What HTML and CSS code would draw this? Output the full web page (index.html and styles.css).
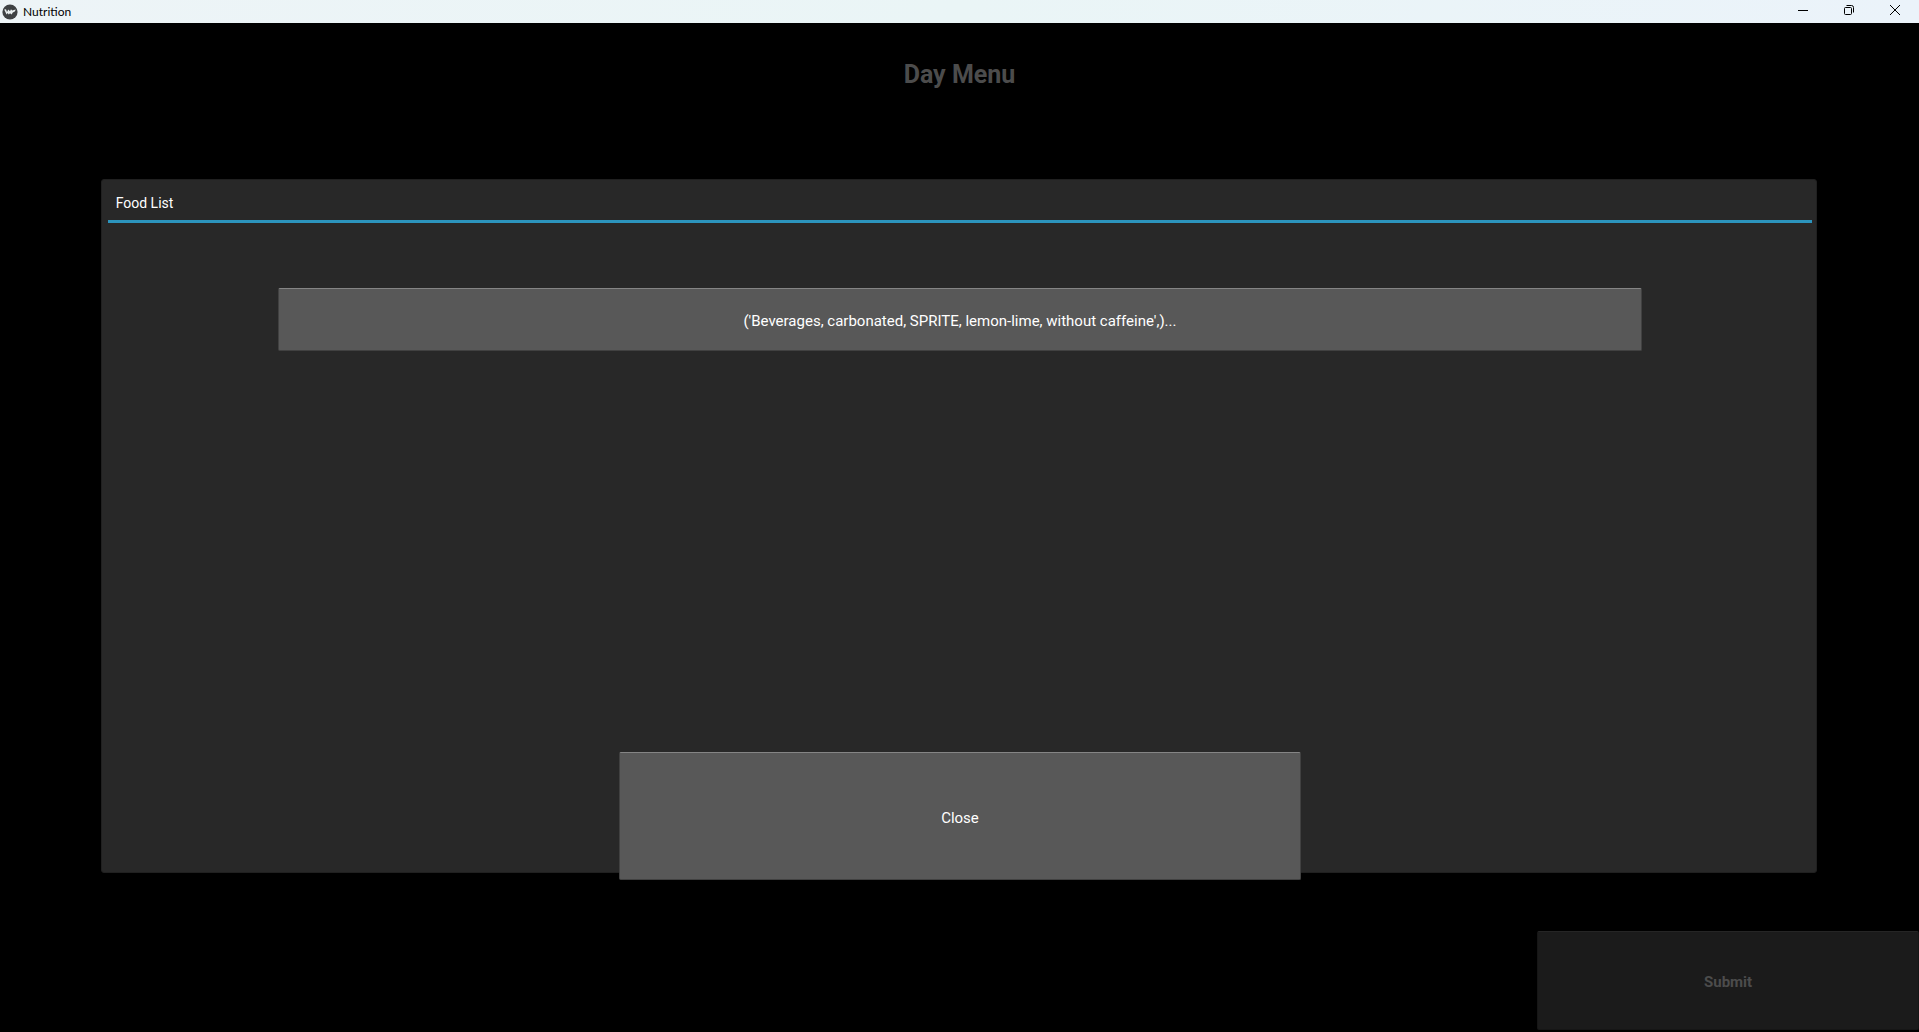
FILE: index.html
```html
<!DOCTYPE html>
<html lang="en">
<head>
<meta charset="utf-8">
<title>Nutrition</title>
<link rel="stylesheet" href="styles.css">
</head>
<body>
<header class="titlebar">
  <svg class="app-icon" viewBox="0 0 16 16" aria-hidden="true">
    <circle cx="8" cy="8" r="7.6" fill="#3f4244"/>
    <path d="M2.2 5.4 4 5.2 5 8 6.3 5.6 8 7.2 9 5.2 10.2 6.4 13.8 5.6 12.8 7.6 10.8 8.4 9.6 10.4 8 9.2 6.8 10.6 5.6 9 4.6 10.4Z" fill="#e9eff0"/>
  </svg>
  <span class="app-name">Nutrition</span>
  <div class="window-controls">
    <button class="window-button" type="button" aria-label="Minimize">
      <svg viewBox="0 0 12 12"><path d="M1 6.5H11"/></svg>
    </button>
    <button class="window-button" type="button" aria-label="Restore">
      <svg viewBox="0 0 12 12"><rect x="1.5" y="3.5" width="7" height="7" rx="1"/><path d="M3.5 1.5H8.5A2 2 0 0 1 10.5 3.5V8.5"/></svg>
    </button>
    <button class="window-button" type="button" aria-label="Close window">
      <svg viewBox="0 0 12 12"><path d="M1 1 11 11M11 1 1 11"/></svg>
    </button>
  </div>
</header>
<main class="stage">
  <h1 class="page-title">Day Menu</h1>
  <button class="submit" type="button">Submit</button>
  <div class="overlay">
    <section class="popup" role="dialog" aria-labelledby="popup-title">
      <h2 class="popup-title" id="popup-title">Food List</h2>
      <div class="popup-body">
        <button class="button food" type="button">('Beverages, carbonated, SPRITE, lemon-lime, without caffeine',)...</button>
        <button class="button close" type="button">Close</button>
      </div>
    </section>
  </div>
</main>
</body>
</html>
```
FILE: styles.css
```css
* {
  box-sizing: border-box;
}

body {
  margin: 0;
  min-height: 100vh;
  display: flex;
  flex-direction: column;
  background: #000;
  color: #fff;
  font-family: Roboto, "Liberation Sans", sans-serif;
}

button {
  margin: 0;
  padding: 0;
  font: inherit;
  color: inherit;
}

.titlebar {
  display: flex;
  align-items: center;
  height: 23px;
  padding: 0 1px 0 2px;
  background: linear-gradient(90deg, #edf4f7, #eaf5f6 50%, #ebf3fa);
  color: #000;
}

.app-icon {
  width: 16px;
  height: 16px;
}

.app-name {
  margin-left: 5px;
  font: 12px/16px Lato, "Open Sans", sans-serif;
}

.window-controls {
  display: flex;
  height: 100%;
  margin-left: auto;
}

.window-button {
  display: flex;
  align-items: center;
  justify-content: center;
  width: 46px;
  padding-bottom: 3px;
  border: 0;
  background: none;
}

.window-button svg {
  width: 12px;
  height: 12px;
  fill: none;
  stroke: #000;
}

.stage {
  position: relative;
  flex: 1;
  display: flex;
  flex-direction: column;
}

.page-title {
  margin: 37px 0 0;
  font-size: 25px;
  line-height: 30px;
  font-weight: 700;
  text-align: center;
  color: #4c4c4c;
}

.submit {
  width: 19.9%;
  height: 99px;
  margin: auto 0 2px auto;
  padding-top: 2px;
  border: 1px solid #161616;
  border-top: 1px solid #252525;
  border-radius: 2px;
  background: #1b1b1b;
  color: #4c4c4c;
  font-size: 15px;
  font-weight: 700;
}

.overlay {
  position: absolute;
  inset: 0;
  display: flex;
  align-items: center;
  justify-content: center;
  padding: 0 1px 3px 0;
}

.popup {
  display: flex;
  flex-direction: column;
  width: 89.5%;
  height: 69%;
  padding: 0 4px 0 6px;
  border: 1px solid #202020;
  border-radius: 3px;
  background: #282828;
}

.popup-title {
  margin: 0;
  padding: 13px 8px 7px;
  border-bottom: 3px solid #2c94bd;
  font-size: 14px;
  line-height: 20px;
  font-weight: 400;
}

.popup-body {
  flex: 1;
  display: flex;
  flex-direction: column;
  align-items: center;
  padding-top: 65px;
}

.button {
  padding-top: 3px;
  border: 1px solid #414141;
  border-top-color: #858585;
  border-radius: 2px;
  background: #585858;
  font-size: 15px;
}

.food {
  width: 80%;
  height: 63px;
}

.close {
  width: 40%;
  height: 128px;
  margin: auto 0 -8px;
}
```
